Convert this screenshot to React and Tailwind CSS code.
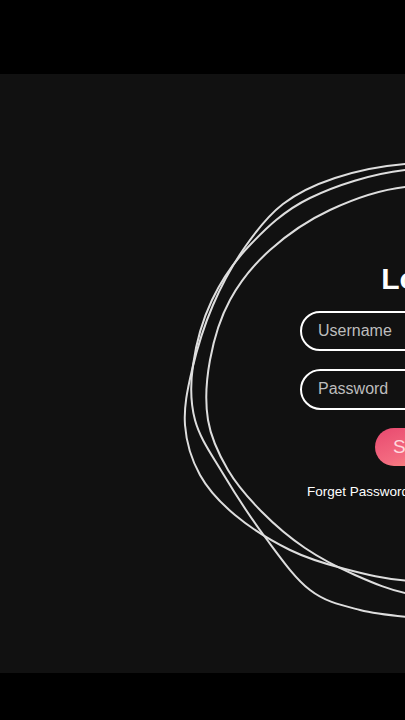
import { useState } from "react";

// ring outlines, traced in page pixels (the ring box sits at 172,141)
const rings = [
  [
    [500, 165], [590, 195], [650, 275], [672, 380], [650, 480], [585, 550], [500, 580],
    [410, 581], [345, 569], [290, 550], [235, 515], [200, 475], [185, 425], [192, 370],
    [213, 305], [245, 247], [283, 204], [335, 178], [405, 164],
  ],
  [
    [510, 175], [600, 210], [660, 300], [675, 410], [640, 520], [560, 595], [480, 620],
    [420, 618], [360, 610], [310, 590], [265, 537], [222, 472], [195, 420], [193, 365],
    [212, 300], [250, 245], [310, 198], [405, 170],
  ],
  [
    [490, 192], [570, 225], [630, 300], [652, 400], [625, 500], [555, 565], [470, 595],
    [410, 594], [355, 575], [305, 548], [262, 512], [228, 470], [208, 420], [210, 360],
    [230, 300], [270, 250], [330, 210], [405, 187],
  ],
];

function closedCurve(pts) {
  const n = pts.length;
  let d = `M${pts[0][0]},${pts[0][1]}`;
  for (let i = 0; i < n; i++) {
    const p0 = pts[(i - 1 + n) % n];
    const p1 = pts[i];
    const p2 = pts[(i + 1) % n];
    const p3 = pts[(i + 2) % n];
    const c1x = p1[0] + (p2[0] - p0[0]) / 6;
    const c1y = p1[1] + (p2[1] - p0[1]) / 6;
    const c2x = p2[0] - (p3[0] - p1[0]) / 6;
    const c2y = p2[1] - (p3[1] - p1[1]) / 6;
    d += ` C${c1x.toFixed(1)},${c1y.toFixed(1)} ${c2x.toFixed(1)},${c2y.toFixed(1)} ${p2[0]},${p2[1]}`;
  }
  return d + "Z";
}

function Rings() {
  return (
    <svg
      className="absolute inset-0 w-full h-full overflow-visible"
      viewBox="172 141 500 500"
      fill="none"
      stroke="#dedede"
      strokeWidth="2"
    >
      {rings.map((pts, i) => (
        <path key={i} d={closedCurve(pts)} />
      ))}
    </svg>
  );
}

export default function App() {
  const [username, setUsername] = useState("");
  const [password, setPassword] = useState("");

  return (
    <div className="w-[405px] h-[720px] flex flex-col bg-black overflow-hidden font-['Liberation_Sans',Arial,sans-serif]">
      <div className="h-[74px] shrink-0 bg-black" />

      <main className="h-[599px] shrink-0 bg-[#111111] overflow-hidden flex">
        <div className="w-[844px] shrink-0 h-full flex items-center justify-center">
          <div className="relative w-[500px] h-[500px] mt-[35px] shrink-0">
            <Rings />

            <form
              className="absolute inset-0 flex flex-col items-center justify-center pb-[18px]"
              onSubmit={(e) => e.preventDefault()}
            >
              <div className="w-[244px] flex flex-col items-center">
                <h2 className="text-[30px] leading-[34px] font-bold text-white mb-[15px]">Login</h2>

                <input
                  className="w-full h-[40px] px-4 rounded-full border-2 border-white bg-transparent text-white text-base placeholder:text-[#bdbdbd] outline-none"
                  value={username}
                  onChange={(e) => setUsername(e.target.value)}
                  placeholder="Username"
                />

                <input
                  className="w-full h-[41px] mt-[18px] px-4 rounded-full border-2 border-white bg-transparent text-white text-base placeholder:text-[#bdbdbd] outline-none"
                  type="password"
                  value={password}
                  onChange={(e) => setPassword(e.target.value)}
                  placeholder="Password"
                />

                <button
                  type="submit"
                  className="mt-[18px] h-[38px] px-[18px] rounded-full bg-gradient-to-br from-[#e8486f] via-[#f36a80] to-[#ffa27a] text-[#ffd9de] text-[19px]"
                >
                  Sign in
                </button>

                <div className="w-full mt-[16px] flex justify-between px-[7px] text-[13.5px] text-white">
                  <span>Forget Password</span>
                  <span>Signup</span>
                </div>
              </div>
            </form>
          </div>
        </div>
      </main>

      <div className="flex-1 bg-black" />
    </div>
  );
}
